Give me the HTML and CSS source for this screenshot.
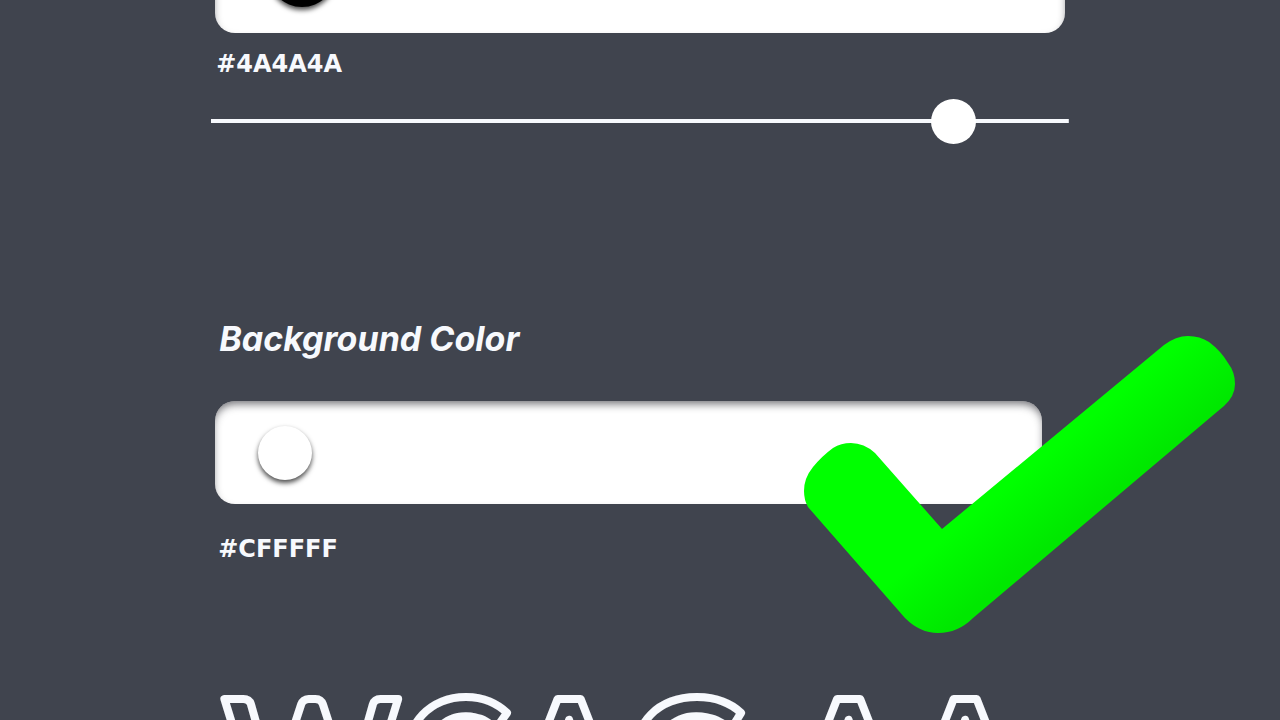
FILE: index.html
```html
<!DOCTYPE html>
<html lang="en">
<head>
    <meta charset="UTF-8">
    <meta name="viewport" content="width=device-width, initial-scale=1.0">
    <title>WCAG AA</title>
    <link rel="stylesheet" href="styles.css">
</head>
<body>
    <main class="container">
        <section class="text-color">
            <button type="button" class="field field-large" aria-labelledby="textHex">
                <span class="swatch swatch-dark"></span>
            </button>
            <label class="hex" id="textHex" for="textRange">#4A4A4A</label>
            <input type="range" class="slider" id="textRange" min="0" max="255" value="226">
        </section>
        <section class="background-color">
            <label class="title" for="backgroundField">Background Color</label>
            <div class="field-wrap">
                <button type="button" class="field" id="backgroundField">
                    <span class="swatch"></span>
                </button>
                <svg class="check" viewBox="0 0 432 298" aria-hidden="true">
                    <defs>
                        <linearGradient id="checkFill" gradientUnits="userSpaceOnUse" x1="250" y1="100" x2="307" y2="169">
                            <stop offset="0.1" stop-color="#00ff00"/>
                            <stop offset="0.9" stop-color="#00e800"/>
                        </linearGradient>
                    </defs>
                    <path fill="url(#checkFill)" d="M4 171 Q0 164 0 155 Q0 142 9 131 Q18 120 29 112 Q37 107 47 107 Q60 107 71 117 L138 193 L360 9 Q372 0 384 0 Q396 0 405 6 Q417 15 424 27 Q431 36 431 48 Q431 60 420 70 L414 75 L169 282 Q154 297 134 297 Q116 297 101 282 Z"/>
                </svg>
            </div>
            <p class="hex">#CFFFFF</p>
        </section>
        <h1 class="rating">
            <svg class="rating-art">
                <text class="rating-text" x="0" y="160">WCAG AA</text>
            </svg>
        </h1>
    </main>
</body>
</html>
```

FILE: styles.css
```css
:root {
    --page-color: #40444e;
    --text-color: #f7f9fd;
    --font-family: Inter, sans-serif;
    --font-family-hex: "DejaVu Sans", sans-serif;
    --font-family-rating: Lato, sans-serif;
}

* {
    box-sizing: border-box;
}

body {
    margin: 0;
    height: 100vh;
    overflow: hidden;
    background-color: var(--page-color);
    color: var(--text-color);
    font-family: var(--font-family);
}

.container {
    width: 67%;
    margin: -88px auto 0;
}

.text-color,
.background-color {
    display: flex;
    flex-direction: column;
    padding: 0 4px;
}

.field {
    display: flex;
    align-items: center;
    width: 100%;
    height: 103px;
    padding: 0 43px;
    border: none;
    border-radius: 20px;
    background-color: #fff;
    box-shadow: inset 0 5px 8px -2px rgba(40, 40, 48, 0.65);
    cursor: pointer;
}

.field-large {
    height: 121px;
    padding: 0 53px;
}

.swatch {
    width: 54px;
    height: 54px;
    border-radius: 50%;
    background-color: #fff;
    box-shadow: 0 3px 5px rgba(0, 0, 0, 0.7);
}

.swatch-dark {
    width: 68px;
    height: 68px;
    background-color: #000;
}

.hex {
    margin: 17px 0 0 1px;
    font-family: var(--font-family-hex);
    font-size: 24px;
    font-weight: 700;
    line-height: 28px;
}

.slider {
    appearance: none;
    height: 44px;
    margin: 21px -4px 0;
    background: linear-gradient(#f7f9fd, #f7f9fd) center / 100% 4px no-repeat;
    cursor: pointer;
}

.slider::-webkit-slider-thumb {
    appearance: none;
    width: 45px;
    height: 45px;
    border-radius: 50%;
    background-color: #fff;
}

.background-color {
    margin-top: 174px;
}

.title {
    margin-left: 4px;
    font-size: 34px;
    font-style: italic;
    font-weight: 700;
    line-height: 44px;
}

.field-wrap {
    position: relative;
    margin: 40px 23px 0 0;
}

/* lies over the right end of the field */
.check {
    position: absolute;
    top: -65px;
    right: -194px;
    width: 432px;
}

.background-color .hex {
    margin: 31px 0 0 3px;
}

.rating {
    margin: 98px 0 0 12px;
}

.rating-art {
    display: block;
    width: 100%;
    height: 200px;
    overflow: visible;
}

.rating-text {
    fill: var(--page-color);
    stroke: var(--text-color);
    stroke-width: 8px;
    stroke-linejoin: round;
    font-family: var(--font-family-rating);
    font-size: 168px;
    font-weight: 700;
    font-kerning: none;
}
```
